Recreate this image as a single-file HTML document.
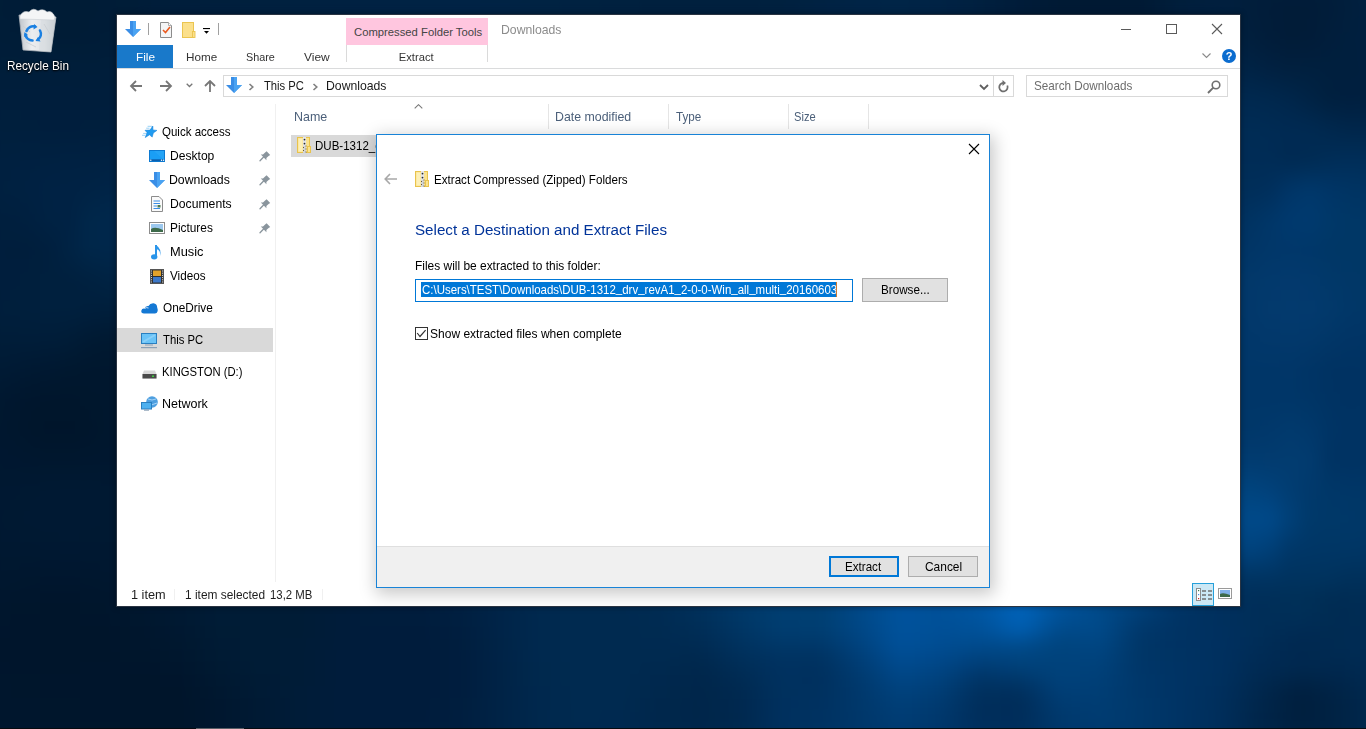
<!DOCTYPE html>
<html><head><meta charset="utf-8">
<style>
*{margin:0;padding:0;box-sizing:border-box}
html,body{width:1366px;height:729px;overflow:hidden}
body{position:relative;font-family:"Liberation Sans",sans-serif;font-size:12px;color:#000;background:#02152e}
.a{position:absolute;display:block}
.t{position:absolute;white-space:nowrap;line-height:1}
</style></head><body>

<div class="a" style="left:0;top:0;width:1366px;height:729px;overflow:hidden;background:#002040"><div class="a" style="left:0;top:0;width:1366px;height:729px;filter:blur(8px)">
<div class="a" style="left:-20px;top:-20px;width:1406px;height:10px;background:linear-gradient(90deg,#001d39 0px,#001c37 40px,#001c36 80px,#001c37 120px,#001d39 160px,#001e3b 200px,#001f3c 240px,#00203e 280px,#002140 320px,#002141 360px,#002243 400px,#002344 440px,#002345 480px,#002344 520px,#002343 560px,#002241 600px,#00213f 640px,#00203e 680px,#00203e 720px,#00203e 760px,#00213f 800px,#002242 840px,#002446 880px,#002447 920px,#002344 960px,#00203f 1000px,#001c39 1040px,#001a34 1080px,#001933 1120px,#001a34 1160px,#001e3b 1200px,#01203f 1240px,#011e3b 1280px,#011d3a 1320px,#011e3d 1360px,#002142 1400px)"></div>
<div class="a" style="left:-20px;top:-10px;width:1406px;height:10px;background:linear-gradient(90deg,#001d39 0px,#001c37 40px,#001c36 80px,#001c37 120px,#001d39 160px,#001e3b 200px,#001f3c 240px,#00203e 280px,#002140 320px,#002141 360px,#002243 400px,#002344 440px,#002345 480px,#002344 520px,#002343 560px,#002241 600px,#00213f 640px,#00203e 680px,#00203e 720px,#00203e 760px,#00213f 800px,#002242 840px,#002446 880px,#002547 920px,#002345 960px,#00203f 1000px,#001c39 1040px,#001a34 1080px,#001933 1120px,#001a34 1160px,#001e3b 1200px,#01203f 1240px,#011d3b 1280px,#011c39 1320px,#011e3c 1360px,#002141 1400px)"></div>
<div class="a" style="left:-20px;top:0px;width:1406px;height:10px;background:linear-gradient(90deg,#001d39 0px,#001c37 40px,#001c36 80px,#001c37 120px,#001d39 160px,#001e3b 200px,#001f3d 240px,#00203e 280px,#002140 320px,#002141 360px,#002243 400px,#002344 440px,#002345 480px,#002345 520px,#002343 560px,#002241 600px,#00213f 640px,#00203e 680px,#00203e 720px,#00203e 760px,#00213f 800px,#002243 840px,#002446 880px,#002547 920px,#002345 960px,#00203f 1000px,#001c39 1040px,#001a34 1080px,#001933 1120px,#001a34 1160px,#001e3c 1200px,#01203f 1240px,#011d3a 1280px,#011c38 1320px,#011e3c 1360px,#002141 1400px)"></div>
<div class="a" style="left:-20px;top:10px;width:1406px;height:10px;background:linear-gradient(90deg,#001d39 0px,#001c37 40px,#001c36 80px,#001c37 120px,#001d39 160px,#001e3b 200px,#001f3d 240px,#00203e 280px,#002140 320px,#002141 360px,#002243 400px,#002344 440px,#002345 480px,#002345 520px,#002343 560px,#002241 600px,#00213f 640px,#00203e 680px,#00203e 720px,#00203e 760px,#00213f 800px,#002243 840px,#002446 880px,#002548 920px,#002345 960px,#002040 1000px,#001c39 1040px,#001a34 1080px,#001933 1120px,#001a34 1160px,#001e3c 1200px,#01203f 1240px,#011d3a 1280px,#011c38 1320px,#011e3c 1360px,#002141 1400px)"></div>
<div class="a" style="left:-20px;top:-20px;width:20px;height:769px;background:linear-gradient(180deg,#001d38 0px,#001d38 30px,#001d39 60px,#001e3b 90px,#001e3c 120px,#001f3e 150px,#00203f 180px,#00203f 210px,#001f3e 240px,#001e3d 270px,#001e3d 300px,#001e3c 330px,#001d39 360px,#001b35 390px,#001931 420px,#001830 450px,#001830 480px,#001831 510px,#001832 540px,#001831 570px,#00172f 600px,#00162e 630px,#00162d 660px,#00162d 690px,#00162e 720px,#00172f 750px)"></div>
<div class="a" style="left:0px;top:-20px;width:20px;height:769px;background:linear-gradient(180deg,#001d37 0px,#001c37 30px,#001d38 60px,#001e3a 90px,#001e3c 120px,#001f3d 150px,#002040 180px,#002141 210px,#001f3e 240px,#001e3c 270px,#001e3d 300px,#001f3c 330px,#001d39 360px,#001a34 390px,#00172f 420px,#00172e 450px,#001730 480px,#001832 510px,#001932 540px,#001831 570px,#00172f 600px,#00162d 630px,#00162c 660px,#00162c 690px,#00162d 720px,#00172e 750px)"></div>
<div class="a" style="left:20px;top:-20px;width:20px;height:769px;background:linear-gradient(180deg,#001c37 0px,#001c36 30px,#001c37 60px,#001e3a 90px,#001e3c 120px,#001f3d 150px,#002041 180px,#002142 210px,#002040 240px,#001e3c 270px,#001f3d 300px,#001f3d 330px,#001d39 360px,#001932 390px,#00162d 420px,#00162c 450px,#00172f 480px,#001932 510px,#001933 540px,#001831 570px,#00172e 600px,#00152c 630px,#00152b 660px,#00152c 690px,#00162c 720px,#00162d 750px)"></div>
<div class="a" style="left:40px;top:-20px;width:20px;height:769px;background:linear-gradient(180deg,#001c37 0px,#001c36 30px,#001c36 60px,#001e3b 90px,#001e3c 120px,#001e3d 150px,#002141 180px,#002244 210px,#002243 240px,#001f3e 270px,#00203e 300px,#00203e 330px,#001d39 360px,#001831 390px,#00162c 420px,#00152b 450px,#00172e 480px,#001933 510px,#001933 540px,#001832 570px,#00162e 600px,#00152b 630px,#00152b 660px,#00152b 690px,#00162c 720px,#00162d 750px)"></div>
<div class="a" style="left:60px;top:-20px;width:20px;height:769px;background:linear-gradient(180deg,#001c37 0px,#001c36 30px,#001c36 60px,#001e3b 90px,#001e3c 120px,#001e3d 150px,#002142 180px,#002244 210px,#002244 240px,#002344 270px,#00203e 300px,#00203e 330px,#001c37 360px,#00182f 390px,#00162c 420px,#00152b 450px,#00172e 480px,#001933 510px,#001933 540px,#001832 570px,#00162e 600px,#00152b 630px,#00152b 660px,#00152b 690px,#00162c 720px,#00162d 750px)"></div>
<div class="a" style="left:80px;top:-20px;width:20px;height:769px;background:linear-gradient(180deg,#001c37 0px,#001c36 30px,#001c37 60px,#001e3a 90px,#001e3c 120px,#001f3d 150px,#002142 180px,#002345 210px,#00274a 240px,#00274a 270px,#002140 300px,#001f3d 330px,#001a33 360px,#00172e 390px,#00172d 420px,#00162c 450px,#00172f 480px,#001933 510px,#001933 540px,#001832 570px,#00172e 600px,#00152c 630px,#00152b 660px,#00152b 690px,#00152c 720px,#00162c 750px)"></div>
<div class="a" style="left:100px;top:-20px;width:20px;height:769px;background:linear-gradient(180deg,#001d37 0px,#001c37 30px,#001d38 60px,#001e3b 90px,#001e3c 120px,#001f3e 150px,#002243 180px,#002447 210px,#00284c 240px,#00274b 270px,#002343 300px,#001f3c 330px,#001931 360px,#00172e 390px,#00172e 420px,#00172e 450px,#00172f 480px,#001932 510px,#001932 540px,#001831 570px,#00172f 600px,#00162c 630px,#00152c 660px,#00152c 690px,#00152b 720px,#00152c 750px)"></div>
<div class="a" style="left:120px;top:-20px;width:20px;height:769px;background:linear-gradient(180deg,#001d38 0px,#001d38 30px,#001d39 60px,#001e3b 90px,#001f3d 120px,#00203f 150px,#002243 180px,#002547 210px,#00274a 240px,#00274a 270px,#002343 300px,#001e3b 330px,#001932 360px,#00172f 390px,#00172f 420px,#00172f 450px,#001830 480px,#001832 510px,#001932 540px,#001831 570px,#001830 600px,#00172e 630px,#00162d 660px,#00152c 690px,#00152b 720px,#00152b 750px)"></div>
<div class="a" style="left:1220px;top:-20px;width:20px;height:769px;background:linear-gradient(180deg,#011f3e 0px,#011f3e 30px,#012141 60px,#002448 90px,#002950 120px,#002c55 150px,#002c57 180px,#002e59 210px,#00315f 240px,#013464 270px,#013668 300px,#013769 330px,#013769 360px,#003669 390px,#003668 420px,#00376a 450px,#013b70 480px,#00427c 510px,#004684 540px,#004078 570px,#003362 600px,#002f5a 630px,#00305d 660px,#002f5d 690px,#002d59 720px,#002c57 750px)"></div>
<div class="a" style="left:1240px;top:-20px;width:20px;height:769px;background:linear-gradient(180deg,#011e3d 0px,#011e3b 30px,#011f3d 60px,#002345 90px,#002950 120px,#002c55 150px,#002c56 180px,#002e59 210px,#003362 240px,#013566 270px,#02386a 300px,#02386b 330px,#01376a 360px,#003668 390px,#003668 420px,#003769 450px,#013b70 480px,#00447e 510px,#004a8a 540px,#00437e 570px,#003360 600px,#002e58 630px,#002e59 660px,#002c56 690px,#002950 720px,#00284f 750px)"></div>
<div class="a" style="left:1260px;top:-20px;width:20px;height:769px;background:linear-gradient(180deg,#011e3b 0px,#011c39 30px,#011d3a 60px,#012142 90px,#00284e 120px,#002b54 150px,#002c56 180px,#002f5c 210px,#003668 240px,#013769 270px,#02396c 300px,#033a6d 330px,#02386b 360px,#003668 390px,#003668 420px,#01386b 450px,#023b6f 480px,#01417a 510px,#004989 540px,#003f77 570px,#003360 600px,#002e59 630px,#002c55 660px,#002850 690px,#002446 720px,#002447 750px)"></div>
<div class="a" style="left:1280px;top:-20px;width:20px;height:769px;background:linear-gradient(180deg,#011d3a 0px,#011c38 30px,#011c38 60px,#01203f 90px,#00264b 120px,#002a53 150px,#002a52 180px,#003567 210px,#00396e 240px,#01376a 270px,#03396d 300px,#033a6e 330px,#02386b 360px,#013668 390px,#003668 420px,#013a6d 450px,#023c70 480px,#013d72 510px,#004078 540px,#003768 570px,#00325e 600px,#003059 630px,#002951 660px,#00284f 690px,#001f3f 720px,#002142 750px)"></div>
<div class="a" style="left:1300px;top:-20px;width:20px;height:769px;background:linear-gradient(180deg,#011d3b 0px,#011c38 30px,#011c39 60px,#00203f 90px,#002345 120px,#002a52 150px,#002b53 180px,#00386b 210px,#003a6f 240px,#003769 270px,#02396c 300px,#033a6e 330px,#02386a 360px,#003465 390px,#003566 420px,#01386b 450px,#023b6f 480px,#01396c 510px,#00396a 540px,#003666 570px,#00335e 600px,#002f58 630px,#002951 660px,#00274e 690px,#001f3e 720px,#002041 750px)"></div>
<div class="a" style="left:1320px;top:-20px;width:20px;height:769px;background:linear-gradient(180deg,#011e3c 0px,#011d3a 30px,#011e3c 60px,#001f3e 90px,#00203f 120px,#00284e 150px,#002d57 180px,#003567 210px,#003869 240px,#003766 270px,#013869 300px,#02396b 330px,#013667 360px,#003262 390px,#003363 420px,#003465 450px,#003363 480px,#003768 510px,#003868 540px,#003665 570px,#00325d 600px,#002c53 630px,#002b53 660px,#00274d 690px,#002142 720px,#002243 750px)"></div>
<div class="a" style="left:1340px;top:-20px;width:20px;height:769px;background:linear-gradient(180deg,#011f3e 0px,#011f3d 30px,#001f3e 60px,#001f3e 90px,#001f3f 120px,#00264b 150px,#002e59 180px,#003463 210px,#003766 240px,#003766 270px,#013767 300px,#013768 330px,#013465 360px,#003262 390px,#003262 420px,#003363 450px,#003262 480px,#003667 510px,#003868 540px,#003665 570px,#00305a 600px,#002b52 630px,#002b53 660px,#002950 690px,#002549 720px,#002548 750px)"></div>
<div class="a" style="left:1360px;top:-20px;width:20px;height:769px;background:linear-gradient(180deg,#012141 0px,#002040 30px,#002040 60px,#00203f 90px,#002040 120px,#00264b 150px,#002e58 180px,#003362 210px,#003666 240px,#003766 270px,#003766 300px,#013667 330px,#003465 360px,#003363 390px,#003363 420px,#003363 450px,#003363 480px,#003666 510px,#003767 540px,#003564 570px,#00305b 600px,#002c54 630px,#002c54 660px,#002b52 690px,#00284e 720px,#00274d 750px)"></div>
<div class="a" style="left:1380px;top:-20px;width:20px;height:769px;background:linear-gradient(180deg,#002243 0px,#002142 30px,#002142 60px,#002142 90px,#002244 120px,#00274d 150px,#002d58 180px,#003260 210px,#003564 240px,#003665 270px,#003666 300px,#013566 330px,#003465 360px,#003364 390px,#003364 420px,#003464 450px,#003464 480px,#003666 510px,#003666 540px,#003463 570px,#00315c 600px,#002e57 630px,#002d55 660px,#002c54 690px,#002a52 720px,#002a51 750px)"></div>
<div class="a" style="left:-20px;top:590px;width:1406px;height:12px;background:linear-gradient(90deg,#00172f 0px,#00162d 40px,#00152c 80px,#00162d 120px,#00172f 160px,#001a33 200px,#001c36 240px,#001c36 280px,#001c36 320px,#001d39 360px,#001d3c 400px,#001e3e 440px,#002042 480px,#002549 520px,#00294f 560px,#002a50 600px,#002a51 640px,#002c54 680px,#00315d 720px,#003969 760px,#003e71 800px,#003f72 840px,#004887 880px,#00519b 920px,#005098 960px,#0055a1 1000px,#0060b4 1040px,#00529a 1080px,#004a89 1120px,#00417a 1160px,#003567 1200px,#00315f 1240px,#002f5a 1280px,#003058 1320px,#002c54 1360px,#002e57 1400px)"></div>
<div class="a" style="left:-20px;top:602px;width:1406px;height:12px;background:linear-gradient(90deg,#00172e 0px,#00162c 40px,#00152b 80px,#00162c 120px,#00172f 160px,#001932 200px,#001c36 240px,#001c36 280px,#001c36 320px,#001c39 360px,#001d3c 400px,#001d3d 440px,#002041 480px,#002549 520px,#00294f 560px,#002a50 600px,#002a50 640px,#002c53 680px,#00305b 720px,#003868 760px,#003e71 800px,#003f72 840px,#004888 880px,#00529c 920px,#005098 960px,#0055a1 1000px,#0062b8 1040px,#00529a 1080px,#004a8a 1120px,#003f77 1160px,#003465 1200px,#00305d 1240px,#002e58 1280px,#003058 1320px,#002b52 1360px,#002d56 1400px)"></div>
<div class="a" style="left:-20px;top:614px;width:1406px;height:12px;background:linear-gradient(90deg,#00172e 0px,#00152c 40px,#00152b 80px,#00152c 120px,#00172e 160px,#001932 200px,#001c36 240px,#001c36 280px,#001c36 320px,#001c3a 360px,#001d3c 400px,#001d3d 440px,#001f40 480px,#002448 520px,#00294f 560px,#002a50 600px,#002a50 640px,#002b52 680px,#002f59 720px,#003766 760px,#003e71 800px,#003f72 840px,#004887 880px,#00529c 920px,#005098 960px,#00549e 1000px,#0062b8 1040px,#004f94 1080px,#004a8a 1120px,#003b71 1160px,#003364 1200px,#00305e 1240px,#002e58 1280px,#002e57 1320px,#002b52 1360px,#002d55 1400px)"></div>
<div class="a" style="left:-20px;top:626px;width:1406px;height:12px;background:linear-gradient(90deg,#00162e 0px,#00152c 40px,#00152b 80px,#00152b 120px,#00162d 160px,#001831 200px,#001c35 240px,#001c36 280px,#001c36 320px,#001c3a 360px,#001c3c 400px,#001c3c 440px,#001e3f 480px,#002448 520px,#00294f 560px,#002a50 600px,#002a50 640px,#002b51 680px,#002d56 720px,#003563 760px,#003c6f 800px,#003d70 840px,#004684 880px,#00529b 920px,#004f96 960px,#005097 1000px,#005cad 1040px,#004988 1080px,#004988 1120px,#00376a 1160px,#003363 1200px,#00305f 1240px,#002e58 1280px,#002a53 1320px,#002b52 1360px,#002c55 1400px)"></div>
<div class="a" style="left:-20px;top:638px;width:1406px;height:12px;background:linear-gradient(90deg,#00162d 0px,#00152c 40px,#00152b 80px,#00152b 120px,#00162d 160px,#00182f 200px,#001b35 240px,#001c36 280px,#001c37 320px,#001c3a 360px,#001c3c 400px,#001c3c 440px,#001e3e 480px,#002447 520px,#00294f 560px,#002a50 600px,#002a50 640px,#002a51 680px,#002b53 720px,#00325f 760px,#003869 800px,#00386a 840px,#00437f 880px,#005099 920px,#004d92 960px,#004b8d 1000px,#004c8e 1040px,#00447e 1080px,#004683 1120px,#003667 1160px,#003263 1200px,#003060 1240px,#002d57 1280px,#002850 1320px,#002b53 1360px,#002c55 1400px)"></div>
<div class="a" style="left:-20px;top:650px;width:1406px;height:12px;background:linear-gradient(90deg,#00162d 0px,#00152c 40px,#00152b 80px,#00152b 120px,#00162c 160px,#00172e 200px,#001b34 240px,#001c36 280px,#001c37 320px,#001c3b 360px,#001c3c 400px,#001c3c 440px,#001d3e 480px,#002347 520px,#00294f 560px,#002a50 600px,#002a50 640px,#002a50 680px,#00294f 720px,#00305b 760px,#003362 800px,#003362 840px,#003f78 880px,#004d93 920px,#00498c 960px,#004380 1000px,#004580 1040px,#00437c 1080px,#00437e 1120px,#003667 1160px,#003363 1200px,#00305f 1240px,#002b55 1280px,#002850 1320px,#002a51 1360px,#002c54 1400px)"></div>
<div class="a" style="left:-20px;top:662px;width:1406px;height:12px;background:linear-gradient(90deg,#00162e 0px,#00152c 40px,#00152b 80px,#00152c 120px,#00152c 160px,#00162d 200px,#001a33 240px,#001c36 280px,#001c37 320px,#001c3b 360px,#001c3c 400px,#001c3c 440px,#001d3e 480px,#002346 520px,#00294e 560px,#002a50 600px,#002a50 640px,#00294f 680px,#00274c 720px,#002d56 760px,#003160 800px,#00315f 840px,#003c73 880px,#00498c 920px,#004584 960px,#003b72 1000px,#004078 1040px,#00427b 1080px,#00417a 1120px,#003668 1160px,#003364 1200px,#00305f 1240px,#002a53 1280px,#00284f 1320px,#00284f 1360px,#002b53 1400px)"></div>
<div class="a" style="left:-20px;top:674px;width:1406px;height:12px;background:linear-gradient(90deg,#00162e 0px,#00162c 40px,#00152c 80px,#00152c 120px,#00152b 160px,#00152c 200px,#001931 240px,#001b35 280px,#001c37 320px,#001c3b 360px,#001c3c 400px,#001c3c 440px,#001d3e 480px,#002346 520px,#00294e 560px,#002a50 600px,#002a50 640px,#00284e 680px,#00264b 720px,#002b53 760px,#00315f 800px,#00305e 840px,#003a6e 880px,#004584 920px,#00417c 960px,#003465 1000px,#003769 1040px,#00417a 1080px,#003f77 1120px,#00376a 1160px,#003364 1200px,#00305e 1240px,#002950 1280px,#002447 1320px,#00264b 1360px,#002a52 1400px)"></div>
<div class="a" style="left:-20px;top:686px;width:1406px;height:12px;background:linear-gradient(90deg,#00172e 0px,#00162c 40px,#00152c 80px,#00152c 120px,#00152b 160px,#00152b 200px,#001830 240px,#001b35 280px,#001c38 320px,#001c3b 360px,#001c3c 400px,#001c3c 440px,#001d3e 480px,#002346 520px,#00284e 560px,#002a50 600px,#002a50 640px,#00284d 680px,#00264a 720px,#002950 760px,#00315e 800px,#00315f 840px,#00386c 880px,#00427d 920px,#003d75 960px,#00305e 1000px,#002f5d 1040px,#003e76 1080px,#003e75 1120px,#00376a 1160px,#003364 1200px,#002f5d 1240px,#00274d 1280px,#001f3f 1320px,#002447 1360px,#002a51 1400px)"></div>
<div class="a" style="left:-20px;top:698px;width:1406px;height:12px;background:linear-gradient(90deg,#00172e 0px,#00162d 40px,#00162c 80px,#00152c 120px,#00152b 160px,#00152b 200px,#00172f 240px,#001a34 280px,#001c38 320px,#001c3b 360px,#001c3c 400px,#001c3c 440px,#001e3e 480px,#002346 520px,#00284e 560px,#002a50 600px,#002a50 640px,#00274c 680px,#00264a 720px,#00284f 760px,#00305e 800px,#003160 840px,#00386b 880px,#003f78 920px,#003a70 960px,#002e5b 1000px,#002d59 1040px,#003b71 1080px,#003d73 1120px,#00386b 1160px,#003364 1200px,#002f5c 1240px,#00264b 1280px,#001f3e 1320px,#002345 1360px,#002950 1400px)"></div>
<div class="a" style="left:-20px;top:710px;width:1406px;height:12px;background:linear-gradient(90deg,#00172e 0px,#00162d 40px,#00162c 80px,#00152c 120px,#00152b 160px,#00152b 200px,#00172f 240px,#001a34 280px,#001c38 320px,#001c3b 360px,#001c3c 400px,#001c3c 440px,#001e3f 480px,#002346 520px,#00284d 560px,#002a50 600px,#002950 640px,#00274c 680px,#00264a 720px,#00284e 760px,#00305e 800px,#003261 840px,#00376a 880px,#003d75 920px,#00386d 960px,#002e5b 1000px,#002d5a 1040px,#00396d 1080px,#003c72 1120px,#00386b 1160px,#003364 1200px,#002e5b 1240px,#00254a 1280px,#001f3e 1320px,#002345 1360px,#00294f 1400px)"></div>
<div class="a" style="left:-20px;top:722px;width:1406px;height:12px;background:linear-gradient(90deg,#00172f 0px,#00162e 40px,#00162d 80px,#00162c 120px,#00152b 160px,#00152b 200px,#00172f 240px,#001a34 280px,#001c38 320px,#001c3b 360px,#001c3c 400px,#001d3d 440px,#001e3f 480px,#002346 520px,#00284d 560px,#002950 600px,#002950 640px,#00284d 680px,#00264b 720px,#00294f 760px,#00305d 800px,#003362 840px,#00376a 880px,#003c72 920px,#00376b 960px,#002f5d 1000px,#002e5b 1040px,#00386b 1080px,#003b70 1120px,#00386b 1160px,#003363 1200px,#002e5a 1240px,#00264a 1280px,#002040 1320px,#002345 1360px,#00294f 1400px)"></div>
<div class="a" style="left:-20px;top:734px;width:1406px;height:12px;background:linear-gradient(90deg,#00172f 0px,#00172e 40px,#00162d 80px,#00162c 120px,#00152b 160px,#00152c 200px,#00172f 240px,#001a34 280px,#001c38 320px,#001d3b 360px,#001d3d 400px,#001d3d 440px,#001f40 480px,#002346 520px,#00284d 560px,#002950 600px,#002950 640px,#00284d 680px,#00274c 720px,#002950 760px,#00305d 800px,#003363 840px,#00376a 880px,#003a70 920px,#00376a 960px,#00305f 1000px,#00305e 1040px,#00376a 1080px,#003a6f 1120px,#00376a 1160px,#003363 1200px,#002e5a 1240px,#00274c 1280px,#002243 1320px,#002447 1360px,#00294f 1400px)"></div>
<div class="a" style="left:-20px;top:746px;width:1406px;height:12px;background:linear-gradient(90deg,#001730 0px,#00172e 40px,#00162d 80px,#00162c 120px,#00152c 160px,#00162c 200px,#00172f 240px,#001a34 280px,#001c38 320px,#001d3b 360px,#001d3d 400px,#001e3e 440px,#001f41 480px,#002347 520px,#00274d 560px,#002950 600px,#002a50 640px,#00284e 680px,#00284d 720px,#002a52 760px,#00305c 800px,#003363 840px,#00376a 880px,#003a6f 920px,#00376a 960px,#003262 1000px,#003261 1040px,#00376a 1080px,#00396e 1120px,#00376a 1160px,#003363 1200px,#002e5a 1240px,#00284e 1280px,#002446 1320px,#002549 1360px,#002950 1400px)"></div>
</div></div>
<div class="a" style="left:0px;top:728px;width:1366px;height:1px;background:#050a10"></div>
<div class="a" style="left:196px;top:728px;width:48px;height:1px;background:#5a5f66"></div>
<svg class="a" style="left:14px;top:6px;" width="46" height="50" viewBox="0 0 46 50">
<defs><linearGradient id="rbf" x1="0" y1="0" x2="1" y2="0"><stop offset="0" stop-color="#bfc5cb"/><stop offset=".35" stop-color="#eceef0"/><stop offset=".7" stop-color="#dfe2e5"/><stop offset="1" stop-color="#b9bfc5"/></linearGradient></defs>
<path d="M5 9 L42 11 L37 46 L9 44 Z" fill="url(#rbf)" stroke="#a9b0b7" stroke-width="0.8"/>
<path d="M27 10.5 L42 11 L37 46 L25 45 Z" fill="#d6dade" opacity=".55"/>
<path d="M6 10 Q9 4 15 6 Q19 1 24 5 Q29 2 33 6 Q38 4 41 11 L40 14 L6 13 Z" fill="#f4f5f6" stroke="#c9ced3" stroke-width="0.6"/>
<path d="M9 20 L16 26 M30 18 L36 28 M12 36 L22 41" stroke="#c8cdd2" stroke-width="0.8"/>
<g fill="none" stroke="#1a80e2" stroke-width="2.6" stroke-linecap="round">
<path d="M12.5 25 A7 7 0 0 1 21 20.5"/>
<path d="M26 24.5 A7 7 0 0 1 24 33.5"/>
<path d="M18.5 34.5 A7 7 0 0 1 11.5 28.5"/>
</g>
<path d="M20 18 L23.5 21 L19.5 23.5 Z M26.5 35.5 L21.5 35 L24 31 Z M10 31 L10.5 26 L14 29 Z" fill="#1a80e2"/>
</svg>
<div class="t" style="left:6.65px;top:60px;font-size:12.4px;transform:scaleX(0.9469);transform-origin:0 0;color:#fff;text-shadow:0 0 2px rgba(0,0,0,.9),0 1px 2px #000">Recycle Bin</div>
<div class="a" style="left:116px;top:14px;width:1125px;height:593px;background:#fff;border:1px solid #2a3442;box-shadow:0 0 5px 1px rgba(0,0,0,.25)"></div>
<svg class="a" style="left:125px;top:21px;" width="16" height="16" viewBox="0 0 16 16"><path d="M5 0 H11 V8 H16 L8 16 L0 8 H5 Z" fill="#3a8ee6"/><path d="M8 0 H11 V8 H16 L8 16 Z" fill="#4aa3f2"/></svg>
<div class="a" style="left:148px;top:23px;width:1px;height:12px;background:#a0a0a0"></div>
<svg class="a" style="left:160px;top:22px;" width="12" height="16" viewBox="0 0 12 16"><path d="M0.5 0.5 H8.5 L11.5 3.5 V15.5 H0.5 Z" fill="#f4f5f6" stroke="#8c8c8c"/><path d="M8.5 0.5 V3.5 H11.5" fill="#fff" stroke="#9c9c9c" stroke-width="0.8"/><path d="M3 8 L5.5 10.5 L10 5" stroke="#ea5a1f" stroke-width="1.6" fill="none"/></svg>
<svg class="a" style="left:182px;top:22px;" width="14" height="16" viewBox="0 0 14 16"><rect x="0.5" y="0.5" width="11" height="15" fill="#fbe08c" stroke="#ebc550"/><rect x="10.5" y="9.5" width="2.5" height="6" fill="#fbe08c" stroke="#ebc550" stroke-width="0.9"/></svg>
<svg class="a" style="left:203px;top:28px;" width="8" height="7" viewBox="0 0 8 7"><rect x="0" y="0" width="7" height="1.1" fill="#000"/><path d="M1 3 H6 L3.5 5.8 Z" fill="#000"/></svg>
<div class="a" style="left:218px;top:23px;width:1px;height:12px;background:#a0a0a0"></div>
<div class="a" style="left:346px;top:18px;width:142px;height:27px;background:#ffc6df"></div>
<div class="t" style="left:353.60px;top:27px;font-size:11.2px;transform:scaleX(1.0071);transform-origin:0 0;color:#444;">Compressed Folder Tools</div>
<div class="t" style="left:500.51px;top:24px;font-size:12.4px;transform:scaleX(0.9867);transform-origin:0 0;color:#8c8c8c;">Downloads</div>
<div class="a" style="left:1121px;top:29px;width:10px;height:1px;background:#5a5a5a"></div>
<div class="a" style="left:1166px;top:24px;width:11px;height:10px;border:1px solid #5a5a5a"></div>
<svg class="a" style="left:1211px;top:23px;" width="12" height="12" viewBox="0 0 12 12"><path d="M1 1 L11 11 M11 1 L1 11" stroke="#5a5a5a" stroke-width="1.1"/></svg>
<div class="a" style="left:117px;top:45px;width:56px;height:23px;background:#1979ca"></div>
<div class="t" style="left:135.74px;top:52px;font-size:11.2px;transform:scaleX(1.0588);transform-origin:0 0;color:#fff;">File</div>
<div class="t" style="left:186.46px;top:52px;font-size:11.2px;transform:scaleX(1.0448);transform-origin:0 0;color:#333;">Home</div>
<div class="t" style="left:246.40px;top:52px;font-size:11.2px;transform:scaleX(0.9667);transform-origin:0 0;color:#333;">Share</div>
<div class="t" style="left:304.10px;top:52px;font-size:11.2px;transform:scaleX(1.0708);transform-origin:0 0;color:#333;">View</div>
<div class="a" style="left:346px;top:45px;width:1px;height:17px;background:#dadada"></div>
<div class="a" style="left:487px;top:45px;width:1px;height:17px;background:#dadada"></div>
<div class="t" style="left:398.80px;top:52px;font-size:11.2px;transform:scaleX(1.0000);transform-origin:0 0;color:#333;">Extract</div>
<svg class="a" style="left:1202px;top:53px;" width="10" height="6" viewBox="0 0 10 6"><path d="M0.5 0.5 L4.5 4.5 L8.5 0.5" stroke="#8a8a8a" fill="none" stroke-width="1.1"/></svg>
<svg class="a" style="left:1222px;top:49px;" width="14" height="14" viewBox="0 0 14 14"><circle cx="7" cy="7" r="7" fill="#0b6ccf"/><text x="7" y="11.3" font-family="Liberation Sans" font-weight="bold" font-size="11" fill="#fff" text-anchor="middle">?</text></svg>
<div class="a" style="left:117px;top:68px;width:1123px;height:1px;background:#dadbdc"></div>
<svg class="a" style="left:129px;top:80px;" width="15" height="12" viewBox="0 0 15 12"><path d="M7 1 L2 6 L7 11 M2 6 H13" stroke="#777" stroke-width="1.8" fill="none"/></svg>
<svg class="a" style="left:159px;top:80px;" width="15" height="12" viewBox="0 0 15 12"><path d="M7 1 L12 6 L7 11 M12 6 H1" stroke="#777" stroke-width="1.8" fill="none"/></svg>
<svg class="a" style="left:186px;top:83px;" width="8" height="5" viewBox="0 0 8 5"><path d="M0.7 0.7 L3.5 3.5 L6.3 0.7" stroke="#777" stroke-width="1.3" fill="none"/></svg>
<svg class="a" style="left:204px;top:80px;" width="12" height="12" viewBox="0 0 12 12"><path d="M1 6 L6 1 L11 6 M6 1 V12" stroke="#777" stroke-width="1.8" fill="none"/></svg>
<div class="a" style="left:223px;top:75px;width:791px;height:22px;border:1px solid #d9d9d9"></div>
<svg class="a" style="left:226px;top:77px;" width="16" height="16" viewBox="0 0 16 16"><path d="M5 0 H11 V8 H16 L8 16 L0 8 H5 Z" fill="#3a8ee6"/><path d="M8 0 H11 V8 H16 L8 16 Z" fill="#4aa3f2"/></svg>
<svg class="a" style="left:248px;top:83px;" width="7" height="8" viewBox="0 0 7 8"><path d="M1.5 1 L4.8 4 L1.5 7" stroke="#808080" stroke-width="1.6" fill="none"/></svg>
<svg class="a" style="left:312px;top:83px;" width="7" height="8" viewBox="0 0 7 8"><path d="M1.5 1 L4.8 4 L1.5 7" stroke="#808080" stroke-width="1.6" fill="none"/></svg>
<div class="t" style="left:263.90px;top:80px;font-size:12.4px;transform:scaleX(0.9068);transform-origin:0 0;color:#1a1a1a;">This PC</div>
<div class="t" style="left:325.61px;top:80px;font-size:12.4px;transform:scaleX(0.9867);transform-origin:0 0;color:#1a1a1a;">Downloads</div>
<svg class="a" style="left:979px;top:84px;" width="10" height="7" viewBox="0 0 10 7"><path d="M1 1 L5 5 L9 1" stroke="#5f5f5f" stroke-width="1.8" fill="none"/></svg>
<div class="a" style="left:993px;top:75px;width:1px;height:22px;background:#d9d9d9"></div>
<svg class="a" style="left:998px;top:80px;" width="12" height="13" viewBox="0 0 12 13"><path d="M9.3 5.5 A4.2 4.2 0 1 1 5.5 3" stroke="#6f6f6f" stroke-width="1.8" fill="none"/><path d="M4.5 0 L8 3 L4.5 6 Z" fill="#6f6f6f"/></svg>
<div class="a" style="left:1026px;top:75px;width:202px;height:22px;border:1px solid #d9d9d9"></div>
<div class="t" style="left:1034.36px;top:80px;font-size:12.4px;transform:scaleX(0.9447);transform-origin:0 0;color:#6d6d6d;">Search Downloads</div>
<svg class="a" style="left:1206px;top:80px;" width="16" height="14" viewBox="0 0 16 14"><circle cx="10" cy="5" r="3.8" stroke="#6f6f6f" stroke-width="1.6" fill="none"/><path d="M7.3 7.7 L2 13" stroke="#6f6f6f" stroke-width="1.9"/></svg>
<div class="a" style="left:275px;top:104px;width:1px;height:478px;background:#f0f0f0"></div>
<div class="a" style="left:117px;top:328px;width:156px;height:24px;background:#d9d9d9"></div>
<div class="t" style="left:162.20px;top:126px;font-size:12.4px;transform:scaleX(0.9297);transform-origin:0 0;color:#000;">Quick access</div>
<div class="t" style="left:169.53px;top:150px;font-size:12.4px;transform:scaleX(0.9750);transform-origin:0 0;color:#000;">Desktop</div>
<div class="t" style="left:169.41px;top:174px;font-size:12.4px;transform:scaleX(0.9917);transform-origin:0 0;color:#000;">Downloads</div>
<div class="t" style="left:169.62px;top:198px;font-size:12.4px;transform:scaleX(0.9839);transform-origin:0 0;color:#000;">Documents</div>
<div class="t" style="left:169.64px;top:222px;font-size:12.4px;transform:scaleX(0.9568);transform-origin:0 0;color:#000;">Pictures</div>
<div class="t" style="left:169.56px;top:246px;font-size:12.4px;transform:scaleX(1.0355);transform-origin:0 0;color:#000;">Music</div>
<div class="t" style="left:170.00px;top:270px;font-size:12.4px;transform:scaleX(0.9421);transform-origin:0 0;color:#000;">Videos</div>
<div class="t" style="left:162.60px;top:302px;font-size:12.4px;transform:scaleX(0.9519);transform-origin:0 0;color:#000;">OneDrive</div>
<div class="t" style="left:162.60px;top:334px;font-size:12.4px;transform:scaleX(0.9114);transform-origin:0 0;color:#000;">This PC</div>
<div class="t" style="left:161.69px;top:366px;font-size:12.4px;transform:scaleX(0.9080);transform-origin:0 0;color:#000;">KINGSTON (D:)</div>
<div class="t" style="left:161.59px;top:398px;font-size:12.4px;transform:scaleX(1.0089);transform-origin:0 0;color:#000;">Network</div>
<svg class="a" style="left:142px;top:125px;" width="16" height="14" viewBox="0 0 16 14"><path d="M10.8 1 L10.9 5 L14.9 5.4 L11.3 7.9 L10.2 12.1 L7.5 9.8 L3.3 12.5 L5 7.5 L3 5.3 L8 5.1 Z" fill="#1f9bf0" stroke="#1583dc" stroke-width="0.6" stroke-linejoin="round"/><path d="M5.6 1.3 H10 M4.2 3.2 H7.5 M1.2 8.4 H4 M0.1 10.3 H3.1" stroke="#8ccdf7" stroke-width="0.9"/></svg>
<svg class="a" style="left:148px;top:150px;" width="18" height="12" viewBox="0 0 18 12"><rect x="1.5" y="0.5" width="15" height="11" fill="#1a9ef5" stroke="#0c7ad2"/><path d="M6 1 L16 10 V1 Z" fill="#3aaffa" opacity=".35"/><rect x="2" y="9.3" width="14" height="1.8" fill="#0a5fae"/><circle cx="2.8" cy="10.2" r=".7" fill="#fff"/><circle cx="13.5" cy="10.2" r=".7" fill="#fff"/><circle cx="15.5" cy="10.2" r=".7" fill="#fff"/></svg>
<svg class="a" style="left:149px;top:172px;" width="16" height="16" viewBox="0 0 16 16"><path d="M5 0 H11 V8 H16 L8 16 L0 8 H5 Z" fill="#3a8ee6"/><path d="M8 0 H11 V8 H16 L8 16 Z" fill="#4aa3f2"/></svg>
<svg class="a" style="left:151px;top:196px;" width="12" height="16" viewBox="0 0 12 16"><path d="M0.5 0.5 H8 L11.5 4 V15.5 H0.5 Z" fill="#fafafa" stroke="#8c8c8c"/><path d="M2.5 5 H9 M2.5 7.5 H9 M2.5 10 H6 M2.5 12.5 H9" stroke="#3a8ee6" stroke-width="1"/><rect x="6.5" y="9" width="3" height="2.5" fill="#4a7a50"/></svg>
<svg class="a" style="left:149px;top:222px;" width="16" height="12" viewBox="0 0 16 12"><rect x="0.5" y="0.5" width="15" height="11" fill="#fff" stroke="#8c8c8c"/><rect x="2" y="2" width="12" height="8" fill="#9cc8ee"/><path d="M2 7 Q6 4 14 8 V10 H2 Z" fill="#3d6a4a"/></svg>
<svg class="a" style="left:151px;top:244px;" width="12" height="16" viewBox="0 0 12 16"><path d="M5 1 V12" stroke="#2a95ea" stroke-width="2"/><ellipse cx="3.2" cy="12.8" rx="3.2" ry="2.6" fill="#2a95ea"/><path d="M5 1 Q11 5 9 12 Q10 6 5 5 Z" fill="#2a95ea"/></svg>
<svg class="a" style="left:150px;top:269px;" width="14" height="15" viewBox="0 0 14 15"><rect x="0.5" y="0.5" width="13" height="14" fill="#303030" stroke="#555"/><rect x="3" y="1.5" width="8" height="5.5" fill="#e3a22a"/><rect x="3" y="8" width="8" height="5.5" fill="#3d78c8"/><path d="M1.5 1.5 V14 M12.5 1.5 V14" stroke="#ddd" stroke-width="1" stroke-dasharray="1 1.2"/></svg>
<svg class="a" style="left:141px;top:302px;" width="17" height="12" viewBox="0 0 17 12"><path d="M3 11.5 Q0 11.5 0.3 8.8 Q0.8 6.2 3.5 6.5 Q4.5 3.5 7.5 4 Q9 1 12.5 1.2 Q16 1.6 16.2 5.5 Q17 7.5 16.5 9.5 Q16 11.5 14 11.5 Z" fill="#1478d4"/><path d="M3.5 6.5 Q5.5 5 7.5 6" stroke="#fff" stroke-width="0.8" fill="none"/></svg>
<svg class="a" style="left:141px;top:333px;" width="17" height="16" viewBox="0 0 17 16"><rect x="0.5" y="0.5" width="15" height="10" fill="#6ac3f7" stroke="#2a7fc0"/><path d="M2 9 L14 2" stroke="#a9dcfb" stroke-width="2" opacity=".5"/><rect x="4" y="11.5" width="8" height="1" fill="#8aa0b5"/><rect x="0" y="14" width="16" height="1.2" fill="#8aa0b5"/></svg>
<svg class="a" style="left:142px;top:370px;" width="15" height="9" viewBox="0 0 15 9"><path d="M2 0.5 H13 L14.5 4 V8.5 H0.5 V4 Z" fill="#d8d8d8"/><rect x="0.5" y="4" width="14" height="4.5" fill="#4a4a4a"/><rect x="10" y="5.5" width="2" height="1.5" fill="#3fd13f"/></svg>
<svg class="a" style="left:141px;top:396px;" width="17" height="15" viewBox="0 0 17 15"><circle cx="11" cy="6" r="5.8" fill="#4d9fe0"/><path d="M7 3 Q11 5 15 3 M6 8 Q11 10 16 7" stroke="#bde0fa" stroke-width="0.8" fill="none"/><rect x="0.5" y="6.5" width="10" height="6.5" fill="#4cb0f0" stroke="#2a7fc0"/><rect x="3" y="13.5" width="5" height="1.2" fill="#8aa0b5"/></svg>
<svg class="a" style="left:259px;top:151px;" width="12" height="11" viewBox="0 0 12 11"><path d="M7.6 0.3 L11.2 3.9 L9.6 4.9 L7.4 7 L7.4 9.2 L1.8 3.6 L4 3.6 L6.1 1.6 Z" fill="#8a959d"/><path d="M4.6 6 L1 9.8" stroke="#8a959d" stroke-width="1.3" stroke-linecap="round"/></svg>
<svg class="a" style="left:259px;top:175px;" width="12" height="11" viewBox="0 0 12 11"><path d="M7.6 0.3 L11.2 3.9 L9.6 4.9 L7.4 7 L7.4 9.2 L1.8 3.6 L4 3.6 L6.1 1.6 Z" fill="#8a959d"/><path d="M4.6 6 L1 9.8" stroke="#8a959d" stroke-width="1.3" stroke-linecap="round"/></svg>
<svg class="a" style="left:259px;top:199px;" width="12" height="11" viewBox="0 0 12 11"><path d="M7.6 0.3 L11.2 3.9 L9.6 4.9 L7.4 7 L7.4 9.2 L1.8 3.6 L4 3.6 L6.1 1.6 Z" fill="#8a959d"/><path d="M4.6 6 L1 9.8" stroke="#8a959d" stroke-width="1.3" stroke-linecap="round"/></svg>
<svg class="a" style="left:259px;top:223px;" width="12" height="11" viewBox="0 0 12 11"><path d="M7.6 0.3 L11.2 3.9 L9.6 4.9 L7.4 7 L7.4 9.2 L1.8 3.6 L4 3.6 L6.1 1.6 Z" fill="#8a959d"/><path d="M4.6 6 L1 9.8" stroke="#8a959d" stroke-width="1.3" stroke-linecap="round"/></svg>
<svg class="a" style="left:414px;top:104px;" width="9" height="5" viewBox="0 0 9 5"><path d="M0.7 4.3 L4.5 0.7 L8.3 4.3" stroke="#777" stroke-width="1.1" fill="none"/></svg>
<div class="t" style="left:293.79px;top:111px;font-size:12.4px;transform:scaleX(1.0062);transform-origin:0 0;color:#4c607a;">Name</div>
<div class="t" style="left:554.60px;top:111px;font-size:12.4px;transform:scaleX(0.9973);transform-origin:0 0;color:#4c607a;">Date modified</div>
<div class="t" style="left:675.50px;top:111px;font-size:12.4px;transform:scaleX(0.9407);transform-origin:0 0;color:#4c607a;">Type</div>
<div class="t" style="left:794.40px;top:111px;font-size:12.4px;transform:scaleX(0.9000);transform-origin:0 0;color:#4c607a;">Size</div>
<div class="a" style="left:548px;top:104px;width:1px;height:25px;background:#e5e5e5"></div>
<div class="a" style="left:668px;top:104px;width:1px;height:25px;background:#e5e5e5"></div>
<div class="a" style="left:788px;top:104px;width:1px;height:25px;background:#e5e5e5"></div>
<div class="a" style="left:868px;top:104px;width:1px;height:25px;background:#e5e5e5"></div>
<div class="a" style="left:291px;top:135px;width:258px;height:22px;background:#d9d9d9"></div>
<svg class="a" style="left:297px;top:137px;" width="14" height="16" viewBox="0 0 14 16"><rect x="0.5" y="0.5" width="12" height="15" fill="#fbe38f" stroke="#e9c34c"/><rect x="1.5" y="1.5" width="4" height="13" fill="#fdf0b8"/><rect x="10.5" y="9.5" width="3" height="6" fill="#fbe38f" stroke="#e9c34c"/><rect x="6" y="0" width="3" height="16" fill="#d2d4d6"/><rect x="6" y="0" width="3" height="9" fill="#e4e5e6"/><circle cx="7.5" cy="2.6" r="0.9" fill="#2a2a2a"/><circle cx="7.5" cy="6.6" r="0.9" fill="#2a2a2a"/><path d="M8.5 9 h1 M6 10.5 h1 M8.5 12 h1 M6 13.5 h1 M8.5 15 h1" stroke="#6a5a30" stroke-width="1"/></svg>
<div class="t" style="left:314.67px;top:140px;font-size:12.4px;transform:scaleX(0.9300);transform-origin:0 0;color:#000;">DUB-1312_drv_revA1_2-0-0-Win_all_multi_20160603.zip</div>
<div class="t" style="left:130.67px;top:589px;font-size:12.4px;transform:scaleX(1.0281);transform-origin:0 0;color:#1e1e1e;">1 item</div>
<div class="t" style="left:185.14px;top:589px;font-size:12.4px;transform:scaleX(0.9610);transform-origin:0 0;color:#1e1e1e;">1 item selected</div>
<div class="t" style="left:270.08px;top:589px;font-size:12.4px;transform:scaleX(0.9200);transform-origin:0 0;color:#1e1e1e;">13,2 MB</div>
<div class="a" style="left:174px;top:589px;width:1px;height:11px;background:#f0f0f0"></div>
<div class="a" style="left:322px;top:589px;width:1px;height:11px;background:#f0f0f0"></div>
<div class="a" style="left:1192px;top:583px;width:22px;height:23px;background:#cce8f5;border:1px solid #26a0da"></div>
<svg class="a" style="left:1196px;top:588px;" width="17" height="13" viewBox="0 0 17 13"><rect x="0.5" y="0.5" width="4" height="12" fill="#fff" stroke="#8c8c8c"/><rect x="2" y="2" width="1.2" height="1.2" fill="#3a7a50"/><rect x="2" y="6" width="1.2" height="1.2" fill="#4a90e0"/><rect x="2" y="10" width="1.2" height="1.2" fill="#d02020"/><path d="M6 3 H10 M12 3 H16 M6 7 H10 M12 7 H16 M6 11 H10 M12 11 H16" stroke="#707070" stroke-width="1.3"/></svg>
<svg class="a" style="left:1218px;top:588px;" width="14" height="11" viewBox="0 0 14 11"><rect x="0.5" y="0.5" width="13" height="10" fill="#fff" stroke="#9a9a9a"/><rect x="2" y="2" width="10" height="7" fill="#7fb0e8"/><path d="M2 6 Q5 4 12 7 V9 H2 Z" fill="#3d6a4a"/></svg>
<div class="a" style="left:376px;top:134px;width:614px;height:454px;box-shadow:2px 4px 16px 2px rgba(0,0,0,.22)"></div>
<div class="a" style="left:376px;top:134px;width:614px;height:454px;background:#fff;border:1px solid #1883d7"></div>
<div class="a" style="left:377px;top:546px;width:612px;height:41px;background:#f0f0f0;border-top:1px solid #dfdfdf"></div>
<svg class="a" style="left:968px;top:143px;" width="12" height="12" viewBox="0 0 12 12"><path d="M1 1 L11 11 M11 1 L1 11" stroke="#000" stroke-width="1.1"/></svg>
<svg class="a" style="left:384px;top:173px;" width="14" height="12" viewBox="0 0 14 12"><path d="M6 1 L1.2 6 L6 11 M1.2 6 H13" stroke="#a8a8a8" stroke-width="1.6" fill="none"/></svg>
<svg class="a" style="left:415px;top:171px;" width="14" height="16" viewBox="0 0 14 16"><rect x="0.5" y="0.5" width="12" height="15" fill="#fbe38f" stroke="#e9c34c"/><rect x="1.5" y="1.5" width="4" height="13" fill="#fdf0b8"/><rect x="10.5" y="9.5" width="3" height="6" fill="#fbe38f" stroke="#e9c34c"/><rect x="6" y="0" width="3" height="16" fill="#d2d4d6"/><rect x="6" y="0" width="3" height="9" fill="#e4e5e6"/><circle cx="7.5" cy="2.6" r="0.9" fill="#2a2a2a"/><circle cx="7.5" cy="6.6" r="0.9" fill="#2a2a2a"/><path d="M8.5 9 h1 M6 10.5 h1 M8.5 12 h1 M6 13.5 h1 M8.5 15 h1" stroke="#6a5a30" stroke-width="1"/></svg>
<div class="t" style="left:433.76px;top:174px;font-size:12.4px;transform:scaleX(0.9369);transform-origin:0 0;color:#000;">Extract Compressed (Zipped) Folders</div>
<div class="t" style="left:414.62px;top:222px;font-size:15.5px;transform:scaleX(0.9781);transform-origin:0 0;color:#003399;">Select a Destination and Extract Files</div>
<div class="t" style="left:414.54px;top:260px;font-size:12.4px;transform:scaleX(0.9634);transform-origin:0 0;color:#000;">Files will be extracted to this folder:</div>
<div class="a" style="left:415px;top:279px;width:438px;height:23px;background:#fff;border:1px solid #0078d7"></div>
<div class="a" style="left:421px;top:282px;width:416px;height:15px;background:#0078d7"></div>
<div class="t" style="left:422.20px;top:284px;font-size:12.4px;transform:scaleX(0.9259);transform-origin:0 0;color:#fff;">C:\Users\TEST\Downloads\DUB-1312<span style="position:relative;top:-2px">_</span>drv<span style="position:relative;top:-2px">_</span>revA1<span style="position:relative;top:-2px">_</span>2-0-0-Win<span style="position:relative;top:-2px">_</span>all<span style="position:relative;top:-2px">_</span>multi<span style="position:relative;top:-2px">_</span>20160603</div>
<div class="a" style="left:836px;top:282px;width:1px;height:15px;background:#d07a30"></div>
<div class="a" style="left:862px;top:278px;width:86px;height:24px;background:#e1e1e1;border:1px solid #adadad"></div>
<div class="t" style="left:880.76px;top:284px;font-size:12.4px;transform:scaleX(0.9420);transform-origin:0 0;color:#000;">Browse...</div>
<div class="a" style="left:415px;top:327px;width:13px;height:13px;border:1px solid #333;background:#fff"></div>
<svg class="a" style="left:416px;top:328px;" width="11" height="11" viewBox="0 0 11 11"><path d="M1.2 5 L4 8.5 L9.6 2.2" stroke="#333" stroke-width="1.2" fill="none"/></svg>
<div class="t" style="left:430.43px;top:328px;font-size:12.4px;transform:scaleX(0.9699);transform-origin:0 0;color:#000;">Show extracted files when complete</div>
<div class="a" style="left:829px;top:556px;width:70px;height:21px;background:#e1e1e1;border:2px solid #0078d7"></div>
<div class="t" style="left:845.36px;top:561px;font-size:12.4px;transform:scaleX(0.9368);transform-origin:0 0;color:#000;">Extract</div>
<div class="a" style="left:908px;top:556px;width:70px;height:21px;background:#e1e1e1;border:1px solid #adadad"></div>
<div class="t" style="left:925.30px;top:561px;font-size:12.4px;transform:scaleX(0.9632);transform-origin:0 0;color:#000;">Cancel</div>
</body></html>
